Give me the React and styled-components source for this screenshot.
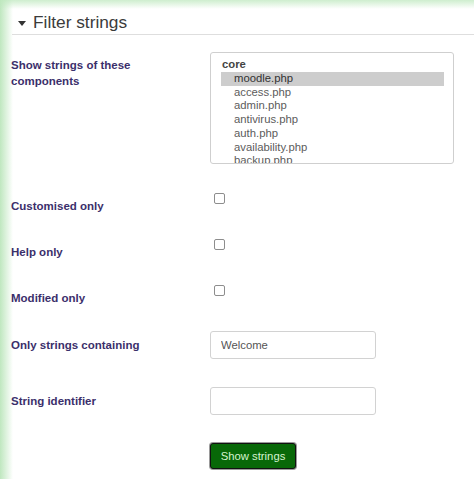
import styled, { createGlobalStyle } from 'styled-components';

const GlobalStyle = createGlobalStyle`
	html, body {
		margin: 0;
		padding: 0;
		background: #ffffff;
	}
	body {
		font-family: 'Liberation Sans', Arial, sans-serif;
	}
`;

const Page = styled.div`
	width: 474px;
	height: 479px;
	overflow: hidden;
	box-sizing: border-box;
	padding-left: 11px;
	/* green glow along top and left edges */
	background:
		linear-gradient(to bottom, rgba(190, 232, 190, 0.75), rgba(190, 232, 190, 0) 9px),
		linear-gradient(to right, rgba(175, 225, 175, 0.8), rgba(175, 225, 175, 0) 13px),
		#ffffff;
`;

const Legend = styled.div`
	display: flex;
	align-items: center;
	gap: 7px;
	margin-left: 1px;
	padding: 12px 0 1px 6px;
	border-bottom: 1px solid #dedede;
	font-size: 17.3px;
	line-height: 21px;
	color: #3b3b3b;
`;

const Caret = styled.span`
	width: 0;
	height: 0;
	border-left: 4.5px solid transparent;
	border-right: 4.5px solid transparent;
	border-top: 5px solid #333;
	margin-top: 2px;
`;

const Form = styled.div`
	padding-top: 17px;
`;

const Row = styled.div`
	display: grid;
	grid-template-columns: 199px 1fr;
	margin-bottom: ${(p) => p.$gap || 16}px;
	min-height: ${(p) => p.$height || 0}px;
`;

const Label = styled.div`
	padding-top: ${(p) => p.$top || 0}px;
	font-size: 11.5px;
	font-weight: bold;
	line-height: 16px;
	color: #3b2f6b;
`;

const ListBox = styled.div`
	width: 244px;
	height: 112px;
	box-sizing: border-box;
	border: 1px solid #cfcfcf;
	border-radius: 3px;
	padding: 4px 9px 0 10px;
	overflow: hidden;
	font-size: 11.3px;
`;

const Group = styled.div`
	padding-left: 1px;
	font-weight: bold;
	line-height: 15px;
	color: #444;
`;

const Option = styled.div`
	padding-left: 13px;
	line-height: 13.7px;
	white-space: nowrap;
	color: ${(p) => (p.$selected ? '#333' : '#5c5c5c')};
	background: ${(p) => (p.$selected ? '#cdcdcd' : 'transparent')};
`;

const Check = styled.input`
	appearance: none;
	width: 11px;
	height: 11px;
	margin: 7px 0 0 4px;
	box-sizing: border-box;
	border: 1px solid #8d8d8d;
	border-radius: 2px;
	background: #fff;
`;

const TextInput = styled.input`
	width: 166px;
	height: 28px;
	margin-top: 7px;
	box-sizing: border-box;
	border: 1px solid #d2d2d2;
	border-radius: 3px;
	padding: 0 10px;
	font-family: 'Liberation Sans', Arial, sans-serif;
	font-size: 11.3px;
	color: #555;
	outline: none;
`;

const Button = styled.button`
	width: 86px;
	height: 26px;
	margin-top: 7px;
	box-sizing: border-box;
	border: 1px solid #111;
	border-radius: 3px;
	box-shadow: 0 0 0 1px #9a9a9a;
	background: #086808;
	color: #d6f3cf;
	font-family: 'Liberation Sans', Arial, sans-serif;
	font-size: 11.3px;
	padding: 0;
`;

const files = [
	'moodle.php',
	'access.php',
	'admin.php',
	'antivirus.php',
	'auth.php',
	'availability.php',
	'backup.php',
	'badges.php',
];

const checks = ['Customised only', 'Help only', 'Modified only'];

export default function App() {
	return (
		<>
			<GlobalStyle />
			<Page>
				<Legend>
					<Caret />
					Filter strings
				</Legend>
				<Form>
					<Row $gap={22}>
						<Label $top={5}>
							Show strings of these
							<br />
							components
						</Label>
						<ListBox>
							<Group>core</Group>
							{files.map((f, i) => (
								<Option key={f} $selected={i === 0}>
									{f}
								</Option>
							))}
						</ListBox>
					</Row>
					{checks.map((c) => (
						<Row key={c} $height={30}>
							<Label $top={12}>{c}</Label>
							<div>
								<Check type="checkbox" />
							</div>
						</Row>
					))}
					<Row $height={40}>
						<Label $top={13}>Only strings containing</Label>
						<div>
							<TextInput defaultValue="Welcome" />
						</div>
					</Row>
					<Row $height={40}>
						<Label $top={13}>String identifier</Label>
						<div>
							<TextInput defaultValue="" />
						</div>
					</Row>
					<Row>
						<div />
						<div>
							<Button>Show strings</Button>
						</div>
					</Row>
				</Form>
			</Page>
		</>
	);
}
